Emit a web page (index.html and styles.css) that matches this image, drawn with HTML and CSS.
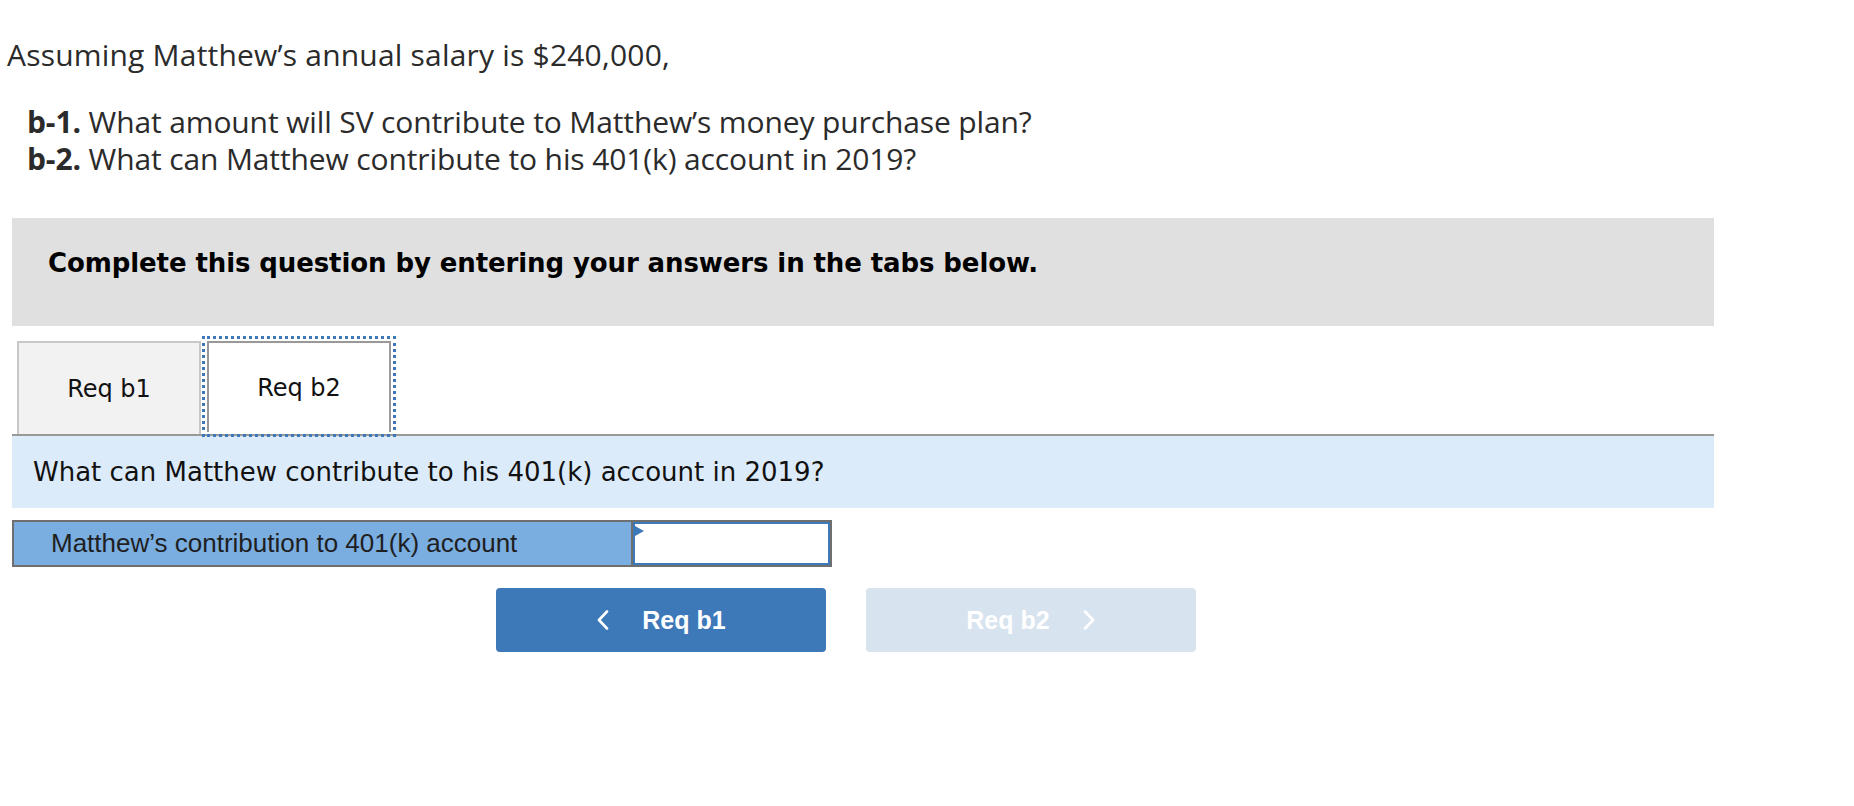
FILE: index.html
```html
<!DOCTYPE html>
<html lang="en">
<head>
<meta charset="utf-8">
<title>Req b2</title>
<link rel="stylesheet" href="styles.css">
</head>
<body>
<div class="page">
  <p class="intro">Assuming Matthew’s annual salary is $240,000,</p>
  <ul class="reqs">
    <li><b>b-1.</b> What amount will SV contribute to Matthew’s money purchase plan?</li>
    <li><b>b-2.</b> What can Matthew contribute to his 401(k) account in 2019?</li>
  </ul>

  <div class="panel instructions">Complete this question by entering your answers in the tabs below.</div>

  <div class="panel tabs">
    <div class="tab">Req b1</div>
    <div class="tab active">Req b2</div>
  </div>

  <div class="panel prompt">What can Matthew contribute to his 401(k) account in 2019?</div>

  <div class="answer-row">
    <div class="answer-label">Matthew’s contribution to 401(k) account</div>
    <div class="answer-cell">
      <span class="cell-marker"></span>
      <div class="answer-input"></div>
    </div>
  </div>

  <div class="nav">
    <div class="nav-btn prev">
      <svg class="chev" width="14" height="20" viewBox="0 0 14 20"><polyline points="11,1.5 3,10 11,18.5" fill="none" stroke="#fff" stroke-width="2.6" stroke-linecap="round" stroke-linejoin="round"/></svg>
      <span>Req b1</span>
    </div>
    <div class="nav-btn next disabled">
      <span>Req b2</span>
      <svg class="chev" width="14" height="20" viewBox="0 0 14 20"><polyline points="3,1.5 11,10 3,18.5" fill="none" stroke="#fff" stroke-width="2.6" stroke-linecap="round" stroke-linejoin="round"/></svg>
    </div>
  </div>
</div>
</body>
</html>
```

FILE: styles.css
```css
html, body {
  margin: 0;
  padding: 0;
  background: #ffffff;
}

.page {
  width: 1854px;
  padding-top: 1px;
  box-sizing: border-box;
}

.intro {
  margin: 35px 0 0 0;
  padding-left: 7px;
  font-family: "Open Sans", "Liberation Sans", sans-serif;
  font-size: 30px;
  line-height: 37px;
  letter-spacing: 0.2px;
  color: #2b2b2b;
}

.reqs {
  list-style: none;
  margin: 30px 0 0 0;
  padding-left: 27px;
  font-family: "Open Sans", "Liberation Sans", sans-serif;
  font-size: 30px;
  line-height: 37px;
  letter-spacing: -0.12px;
  color: #2b2b2b;
}

.reqs b {
  font-weight: 700;
}

.panel {
  margin-left: 12px;
  width: 1702px;
  box-sizing: border-box;
}

.instructions {
  margin-top: 41px;
  height: 108px;
  padding: 30px 0 0 36px;
  background: #e0e0e0;
  font-family: "DejaVu Sans", Verdana, sans-serif;
  font-weight: 700;
  font-size: 26px;
  line-height: 30px;
  letter-spacing: -0.1px;
  color: #000;
}

.tabs {
  margin-top: 15px;
  display: flex;
  align-items: flex-end;
  padding-left: 5px;
  border-bottom: 2px solid #999999;
}

.tab {
  width: 184px;
  height: 93px;
  box-sizing: border-box;
  display: flex;
  align-items: center;
  justify-content: center;
  border: 2px solid #c8c8c8;
  border-bottom: none;
  background: #f2f2f2;
  font-family: "DejaVu Sans", Verdana, sans-serif;
  font-size: 24px;
  color: #111;
}

.tab.active {
  margin-left: 6px;
  height: 91px;
  margin-bottom: 2px;
  background: #ffffff;
  border-color: #999999;
  outline: 3px dotted #3d79b9;
  outline-offset: 2px;
  position: relative;
  z-index: 1;
}

.prompt {
  height: 72px;
  padding: 21px 0 0 21px;
  background: #dcebf9;
  font-family: "DejaVu Sans", Verdana, sans-serif;
  font-size: 26px;
  line-height: 30px;
  color: #111;
}

.answer-row {
  margin: 12px 0 0 12px;
  width: 820px;
  height: 47px;
  box-sizing: border-box;
  display: flex;
  border: 2px solid #6f6f6f;
}

.answer-label {
  width: 617px;
  background: #7aade0;
  padding-left: 37px;
  box-sizing: border-box;
  display: flex;
  align-items: center;
  font-family: "Liberation Sans", Arial, sans-serif;
  font-size: 26px;
  color: #1f1f1f;
}

.answer-cell {
  flex: 1;
  position: relative;
  border-left: 2px solid #6f6f6f;
  background: #ffffff;
}

.answer-input {
  height: 100%;
  box-sizing: border-box;
  border: 2px solid #3d79b9;
  background: #ffffff;
}

.cell-marker {
  position: absolute;
  left: 2px;
  top: 4px;
  width: 0;
  height: 0;
  border-top: 5px solid transparent;
  border-bottom: 5px solid transparent;
  border-left: 9px solid #3d79b9;
}

.nav {
  margin: 21px 0 0 496px;
  display: flex;
  gap: 40px;
}

.nav-btn {
  width: 330px;
  height: 64px;
  border-radius: 4px;
  display: flex;
  align-items: center;
  justify-content: center;
  gap: 32px;
  font-family: "Liberation Sans", Arial, sans-serif;
  font-weight: 700;
  font-size: 25px;
  color: #ffffff;
}

.nav-btn.prev {
  background: #3d79b9;
}

.nav-btn.disabled {
  background: #d8e3f0;
}

.chev {
  display: block;
}
```
